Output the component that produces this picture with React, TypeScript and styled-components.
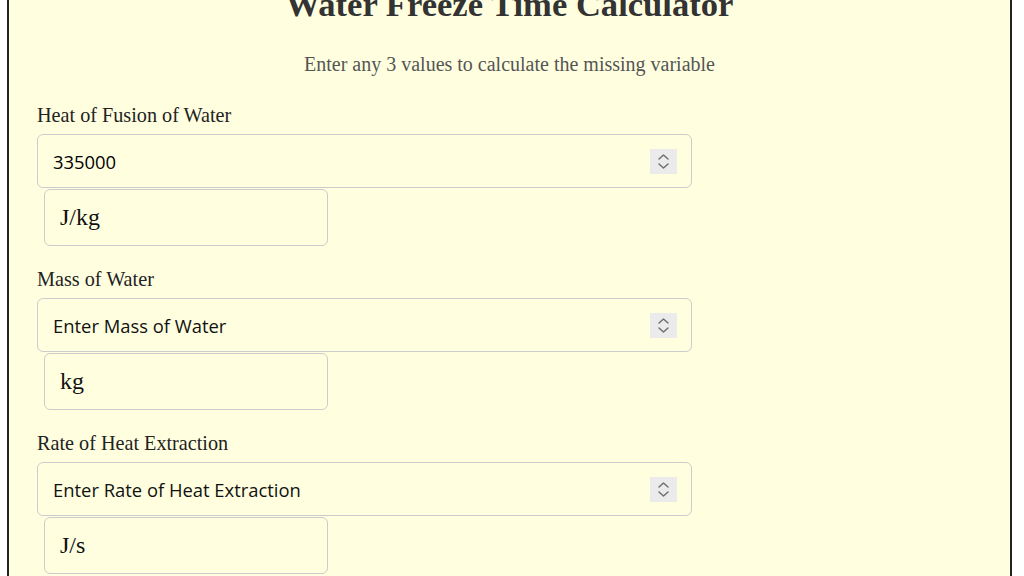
import styled, { createGlobalStyle } from "styled-components";

const GlobalStyle = createGlobalStyle`
  html, body {
    margin: 0;
    padding: 0;
    background: #ffffff;
    overflow: hidden;
  }
  body {
    font-family: "Liberation Serif", "Times New Roman", serif;
  }
`;

const Container = styled.div`
  margin: -37px 12px 0 7px;
  padding: 20px 28px 40px;
  background: #ffffe0;
  border: 2px solid #222;
  min-height: 700px;
`;

const Title = styled.h1`
  margin: 0 0 29px;
  font-size: 34.6px;
  line-height: 39px;
  font-weight: bold;
  text-align: center;
  color: #333;
`;

const Subtitle = styled.p`
  margin: 0 0 28px;
  font-size: 20px;
  line-height: 23px;
  text-align: center;
  color: #555;
`;

const Field = styled.div`
  margin-bottom: 22px;
`;

const Label = styled.label`
  display: block;
  font-size: 20.2px;
  line-height: 23px;
  color: #222;
  margin-bottom: 7px;
`;

const InputWrap = styled.div`
  position: relative;
  width: 655px;
`;

const NumberInput = styled.input`
  box-sizing: border-box;
  width: 100%;
  height: 54px;
  padding: 0 50px 0 15px;
  border: 1px solid #ccc;
  border-radius: 6px;
  background: transparent;
  font-family: "Open Sans", "Noto Sans", sans-serif;
  font-size: 18.4px;
  color: #000;
  outline: none;
  &::placeholder {
    color: #111;
    opacity: 1;
  }
`;

const Spinner = styled.span`
  position: absolute;
  right: 15px;
  top: 15px;
  width: 27px;
  height: 25px;
  background: #ebebeb;
  display: flex;
  align-items: center;
  justify-content: center;
  pointer-events: none;
`;

const UnitBox = styled.div`
  box-sizing: border-box;
  width: 284px;
  height: 57px;
  margin: 1px 0 0 7px;
  padding: 0 15px;
  display: flex;
  align-items: center;
  border: 1px solid #ccc;
  border-radius: 6px;
  font-size: 24px;
  color: #111;
`;

type FieldProps = {
  label: string;
  unit: string;
  value?: string;
};

function Chevrons() {
  return (
    <svg width="13" height="17" viewBox="0 0 13 17" fill="none">
      <path d="M2 6 L6.5 2 L11 6" stroke="#6f6f6f" strokeWidth="1.5" strokeLinecap="round" strokeLinejoin="round" />
      <path d="M2 11 L6.5 15 L11 11" stroke="#6f6f6f" strokeWidth="1.5" strokeLinecap="round" strokeLinejoin="round" />
    </svg>
  );
}

function CalcField({ label, unit, value }: FieldProps) {
  return (
    <Field>
      <Label>{label}</Label>
      <InputWrap>
        <NumberInput
          type="text"
          defaultValue={value}
          placeholder={value ? undefined : `Enter ${label}`}
        />
        <Spinner>
          <Chevrons />
        </Spinner>
      </InputWrap>
      <UnitBox>{unit}</UnitBox>
    </Field>
  );
}

export default function App() {
  return (
    <>
      <GlobalStyle />
      <Container>
        <Title>Water Freeze Time Calculator</Title>
        <Subtitle>Enter any 3 values to calculate the missing variable</Subtitle>
        <CalcField label="Heat of Fusion of Water" unit="J/kg" value="335000" />
        <CalcField label="Mass of Water" unit="kg" />
        <CalcField label="Rate of Heat Extraction" unit="J/s" />
        <CalcField label="Time to Freeze" unit="s" />
      </Container>
    </>
  );
}
